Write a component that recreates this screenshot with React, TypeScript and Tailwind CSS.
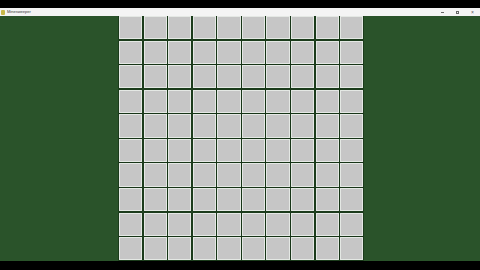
import React from "react";

export default function App() {
  const cells = Array.from({ length: 100 }, (_, i) => i);
  return (
    <div className="w-[480px] h-[270px] flex flex-col bg-black overflow-hidden" style={{ fontFamily: "'Liberation Sans', Arial, sans-serif" }}>
      <div className="h-[8px] bg-black" />
      <div className="h-[8px] bg-[#f4f4f4] flex items-center pl-[1px] pr-[6px]">
        <div className="w-[4px] h-[5px] bg-[#c8b84a] rounded-[1px] mr-[2px]" />
        <span className="text-[4px] leading-none text-[#333]">Minesweeper</span>
        <div className="flex-1" />
        <div className="flex items-center gap-[12px]">
          <div className="w-[3px] h-[1px] bg-[#666]" />
          <div className="w-[3px] h-[3px] border border-[#666]" />
          <span className="text-[5px] leading-none text-[#555]">×</span>
        </div>
      </div>
      <div className="flex-1 bg-[#2a532a] overflow-hidden pl-[119px]">
        <div className="grid grid-cols-[repeat(10,23.2px)] auto-rows-[23.2px] gap-[1.4px] w-[246px]">
          {cells.map((i) => (
            <div key={i} className="border border-[#e4e8e4] bg-[#c6c6c6] shadow-[0_0_0_0.7px_#163216]" />
          ))}
        </div>
      </div>
      <div className="h-[9px] bg-black" />
    </div>
  );
}
